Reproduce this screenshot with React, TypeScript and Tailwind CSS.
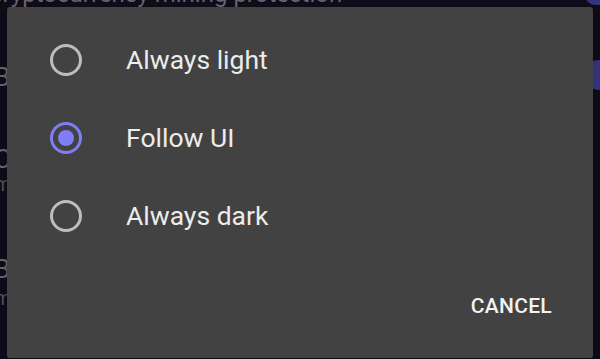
import React from 'react';

const options = [
  { label: 'Always light', checked: false },
  { label: 'Follow UI', checked: true },
  { label: 'Always dark', checked: false },
];

const Radio = ({ checked }: { checked: boolean }) =>
  checked ? (
    <div className="w-[32px] h-[32px] rounded-full border-[3px] border-[#7f7ff5] flex items-center justify-center">
      <div className="w-[16px] h-[16px] rounded-full bg-[#7f7ff5]" />
    </div>
  ) : (
    <div className="w-[32px] h-[32px] rounded-full border-[3px] border-[#bdbdbd]" />
  );

const App = () => {
  return (
    <div
      className="relative w-[600px] h-[359px] overflow-hidden bg-[#0f0b18]"
      style={{ fontFamily: 'Roboto, "Noto Sans", sans-serif' }}
    >
      {/* settings list behind the dialog */}
      <div className="flex flex-col -mt-[19px] -ml-[6px] -mr-[14px] text-[#66636c]">
        <div className="h-[83px] flex justify-between items-start">
          <span className="text-[24px] leading-[26px] -ml-[4px]">cryptocurrency mining protection</span>
          <div className="w-[30px] h-[24px] rounded-full bg-[#34347a]" />
        </div>
        <div className="h-[82px] flex justify-between items-start">
          <span className="text-[26px] leading-[26px]">B</span>
          <div className="mt-[-4px] w-[30px] h-[30px] rounded-full bg-[#34347a]" />
        </div>
        <div className="h-[110px] flex flex-col">
          <span className="text-[26px] leading-[26px]">C</span>
          <span className="text-[20px] leading-[20px] mt-[2px] text-[#524f58]">m</span>
        </div>
        <div className="flex flex-col">
          <span className="text-[26px] leading-[26px]">B</span>
          <span className="text-[20px] leading-[20px] mt-[6px] text-[#524f58]">m</span>
        </div>
      </div>

      <div className="absolute left-[7px] top-[7px] w-[586px] h-[351px] rounded-[3px] bg-[#424242] flex flex-col shadow-lg">
        <div className="pt-[14px]">
          {options.map((o) => (
            <div key={o.label} className="h-[78px] flex items-center pl-[43px]">
              <Radio checked={o.checked} />
              <span className="ml-[44px] text-[26.5px] text-[#ececec]">{o.label}</span>
            </div>
          ))}
        </div>
        <div className="mt-auto flex justify-end pr-[41px] pb-[39px]">
          <span className="text-[21px] leading-[26px] font-medium tracking-[0.3px] text-[#f2f2f2]">
            CANCEL
          </span>
        </div>
      </div>
    </div>
  );
};

export default App;
